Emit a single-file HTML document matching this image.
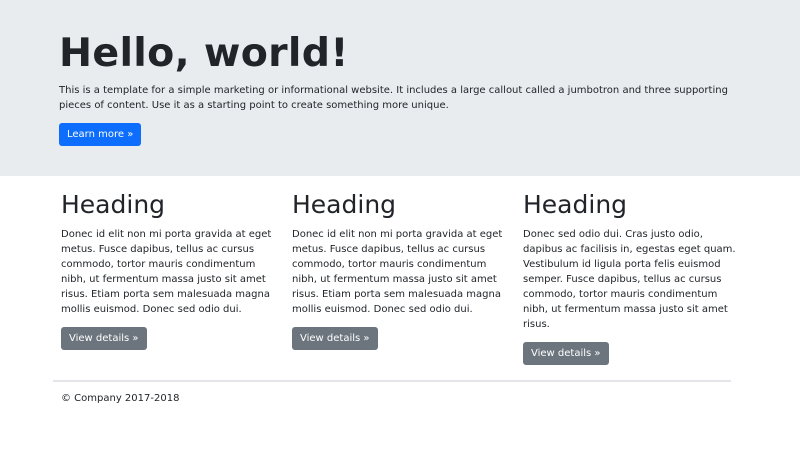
<!DOCTYPE html>
<html><head><style>
*{box-sizing:border-box;margin:0;padding:0}
body{width:800px;height:450px;background:#fff;font-family:"DejaVu Sans","Liberation Sans",sans-serif;color:#212529;font-size:10px;line-height:15px;overflow:hidden}
.jumbo{background:#e9ecef;height:176px;padding:30px 0 0 59px}
h1{font-size:39.5px;font-weight:bold;line-height:46px;letter-spacing:0.3px;margin-bottom:7px}
.jumbo p{width:680px;margin-bottom:10px}
.btn{display:inline-block;border-radius:3px;color:#fff;font-size:10px;line-height:15px;padding:4px 8px}
.bp{background:#0d6efd}
.bs{background:#6c757d;padding:4px 8px}
.col{position:absolute;top:189px;width:218px}
h2{font-size:25px;font-weight:normal;line-height:32px;margin-bottom:6px}
.col p{margin-bottom:10px}
hr{position:absolute;left:53px;width:678px;top:380px;border:0;border-top:2px solid #e3e5e8}
.foot{position:absolute;left:61px;top:391px;font-size:10px}
</style></head><body>
<div class="jumbo">
<h1>Hello, world!</h1>
<p>This is a template for a simple marketing or informational website. It includes a large callout called a jumbotron and three supporting pieces of content. Use it as a starting point to create something more unique.</p>
<span class="btn bp">Learn more »</span>
</div>
<div class="col" style="left:61px"><h2>Heading</h2><p>Donec id elit non mi porta gravida at eget metus. Fusce dapibus, tellus ac cursus commodo, tortor mauris condimentum nibh, ut fermentum massa justo sit amet risus. Etiam porta sem malesuada magna mollis euismod. Donec sed odio dui.</p><span class="btn bs">View details »</span></div>
<div class="col" style="left:292px"><h2>Heading</h2><p>Donec id elit non mi porta gravida at eget metus. Fusce dapibus, tellus ac cursus commodo, tortor mauris condimentum nibh, ut fermentum massa justo sit amet risus. Etiam porta sem malesuada magna mollis euismod. Donec sed odio dui.</p><span class="btn bs">View details »</span></div>
<div class="col" style="left:523px"><h2>Heading</h2><p>Donec sed odio dui. Cras justo odio, dapibus ac facilisis in, egestas eget quam. Vestibulum id ligula porta felis euismod semper. Fusce dapibus, tellus ac cursus commodo, tortor mauris condimentum nibh, ut fermentum massa justo sit amet risus.</p><span class="btn bs">View details »</span></div>
<hr>
<div class="foot">© Company 2017-2018</div>
</body></html>
